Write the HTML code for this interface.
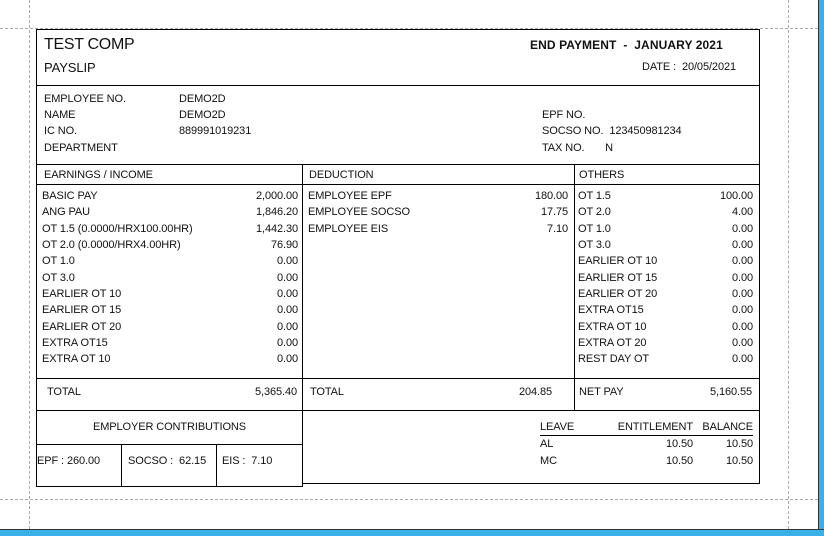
<!DOCTYPE html>
<html><head><meta charset="utf-8"><style>
*{margin:0;padding:0;box-sizing:border-box}
body{width:824px;height:536px;background:#fff;position:relative;overflow:hidden;font-family:"Liberation Sans",sans-serif;font-size:11px;color:#111;letter-spacing:-0.1px}
.a{position:absolute;white-space:nowrap;line-height:14px}
.r{text-align:right}
.h{position:absolute;background:#000;height:1px}
.v{position:absolute;background:#000;width:1px}
.dh{position:absolute;height:0;border-top:1px dashed #aaa}
.dv{position:absolute;width:0;border-left:1px dashed #aaa}
</style></head><body>
<div class="dv" style="left:29px;top:0;height:529px"></div>
<div class="dv" style="left:788px;top:0;height:529px"></div>
<div class="dh" style="left:0;top:28px;width:818px"></div>
<div class="dh" style="left:0;top:499px;width:818px"></div>
<div style="position:absolute;left:818px;top:0;width:6px;height:536px;background:#3ab0e8;border-left:1px solid #333"></div>
<div style="position:absolute;left:0;top:529px;width:824px;height:7px;background:#3ab0e8;border-top:1px solid #333"></div>

<div style="position:absolute;left:36px;top:29px;width:724px;height:455px;border:1px solid #000"></div>
<div class="h" style="left:36px;top:85px;width:724px"></div>
<div class="h" style="left:36px;top:164px;width:724px"></div>
<div class="h" style="left:36px;top:184px;width:724px"></div>
<div class="h" style="left:36px;top:378px;width:724px"></div>
<div class="h" style="left:36px;top:410px;width:724px"></div>
<div class="v" style="left:302px;top:164px;height:320px"></div>
<div class="v" style="left:574px;top:164px;height:246px"></div>
<div style="position:absolute;left:36px;top:410px;width:267px;height:77px;border:1px solid #000;background:#fff"></div>
<div class="h" style="left:36px;top:444px;width:267px"></div>
<div class="v" style="left:121px;top:444px;height:43px"></div>
<div class="v" style="left:216px;top:444px;height:43px"></div>

<div class="a" style="left:44px;top:36px;font-size:16px;line-height:18px;letter-spacing:-0.3px">TEST COMP</div>
<div class="a" style="left:44px;top:60px;font-size:13px;line-height:15px">PAYSLIP</div>
<div class="a" style="left:530px;top:38px;font-size:12px;font-weight:bold;letter-spacing:0.1px">END PAYMENT &nbsp;- &nbsp;JANUARY 2021</div>
<div class="a" style="left:642px;top:60px">DATE : &nbsp;20/05/2021</div>

<div class="a" style="left:44px;top:92px">EMPLOYEE NO.</div>
<div class="a" style="left:179px;top:92px">DEMO2D</div>
<div class="a" style="left:44px;top:108px">NAME</div>
<div class="a" style="left:179px;top:108px">DEMO2D</div>
<div class="a" style="left:44px;top:124px">IC NO.</div>
<div class="a" style="left:179px;top:124px">889991019231</div>
<div class="a" style="left:44px;top:141px">DEPARTMENT</div>
<div class="a" style="left:542px;top:108px">EPF NO.</div>
<div class="a" style="left:542px;top:124px">SOCSO NO. &nbsp;123450981234</div>
<div class="a" style="left:542px;top:141px">TAX NO. &nbsp;&nbsp;&nbsp;&nbsp;&nbsp;&nbsp;N</div>

<div class="a" style="left:44px;top:168px">EARNINGS / INCOME</div>
<div class="a" style="left:309px;top:168px">DEDUCTION</div>
<div class="a" style="left:579px;top:168px">OTHERS</div>

<div class="a" style="left:42px;top:189px">BASIC PAY</div><div class="a r" style="right:526px;top:189px">2,000.00</div>
<div class="a" style="left:42px;top:205px">ANG PAU</div><div class="a r" style="right:526px;top:205px">1,846.20</div>
<div class="a" style="left:42px;top:222px">OT 1.5 (0.0000/HRX100.00HR)</div><div class="a r" style="right:526px;top:222px">1,442.30</div>
<div class="a" style="left:42px;top:238px">OT 2.0 (0.0000/HRX4.00HR)</div><div class="a r" style="right:526px;top:238px">76.90</div>
<div class="a" style="left:42px;top:254px">OT 1.0</div><div class="a r" style="right:526px;top:254px">0.00</div>
<div class="a" style="left:42px;top:271px">OT 3.0</div><div class="a r" style="right:526px;top:271px">0.00</div>
<div class="a" style="left:42px;top:287px">EARLIER OT 10</div><div class="a r" style="right:526px;top:287px">0.00</div>
<div class="a" style="left:42px;top:303px">EARLIER OT 15</div><div class="a r" style="right:526px;top:303px">0.00</div>
<div class="a" style="left:42px;top:320px">EARLIER OT 20</div><div class="a r" style="right:526px;top:320px">0.00</div>
<div class="a" style="left:42px;top:336px">EXTRA OT15</div><div class="a r" style="right:526px;top:336px">0.00</div>
<div class="a" style="left:42px;top:352px">EXTRA OT 10</div><div class="a r" style="right:526px;top:352px">0.00</div>

<div class="a" style="left:308px;top:189px">EMPLOYEE EPF</div><div class="a r" style="right:256px;top:189px">180.00</div>
<div class="a" style="left:308px;top:205px">EMPLOYEE SOCSO</div><div class="a r" style="right:256px;top:205px">17.75</div>
<div class="a" style="left:308px;top:222px">EMPLOYEE EIS</div><div class="a r" style="right:256px;top:222px">7.10</div>

<div class="a" style="left:578px;top:189px">OT 1.5</div><div class="a r" style="right:71px;top:189px">100.00</div>
<div class="a" style="left:578px;top:205px">OT 2.0</div><div class="a r" style="right:71px;top:205px">4.00</div>
<div class="a" style="left:578px;top:222px">OT 1.0</div><div class="a r" style="right:71px;top:222px">0.00</div>
<div class="a" style="left:578px;top:238px">OT 3.0</div><div class="a r" style="right:71px;top:238px">0.00</div>
<div class="a" style="left:578px;top:254px">EARLIER OT 10</div><div class="a r" style="right:71px;top:254px">0.00</div>
<div class="a" style="left:578px;top:271px">EARLIER OT 15</div><div class="a r" style="right:71px;top:271px">0.00</div>
<div class="a" style="left:578px;top:287px">EARLIER OT 20</div><div class="a r" style="right:71px;top:287px">0.00</div>
<div class="a" style="left:578px;top:303px">EXTRA OT15</div><div class="a r" style="right:71px;top:303px">0.00</div>
<div class="a" style="left:578px;top:320px">EXTRA OT 10</div><div class="a r" style="right:71px;top:320px">0.00</div>
<div class="a" style="left:578px;top:336px">EXTRA OT 20</div><div class="a r" style="right:71px;top:336px">0.00</div>
<div class="a" style="left:578px;top:352px">REST DAY OT</div><div class="a r" style="right:71px;top:352px">0.00</div>

<div class="a" style="left:47px;top:385px">TOTAL</div><div class="a r" style="right:527px;top:385px">5,365.40</div>
<div class="a" style="left:310px;top:385px">TOTAL</div><div class="a r" style="right:272px;top:385px">204.85</div>
<div class="a" style="left:579px;top:385px">NET PAY</div><div class="a r" style="right:72px;top:385px">5,160.55</div>

<div class="a" style="left:36px;top:420px;width:267px;text-align:center">EMPLOYER CONTRIBUTIONS</div>
<div class="a" style="left:37px;top:454px">EPF : 260.00</div>
<div class="a" style="left:128px;top:454px">SOCSO : &nbsp;62.15</div>
<div class="a" style="left:222px;top:454px">EIS : &nbsp;7.10</div>

<div class="a" style="left:540px;top:420px">LEAVE</div>
<div class="a r" style="right:131px;top:420px">ENTITLEMENT</div>
<div class="a r" style="right:71px;top:420px">BALANCE</div>
<div class="h" style="left:540px;top:435px;width:213px"></div>
<div class="a" style="left:540px;top:437px">AL</div><div class="a r" style="right:131px;top:437px">10.50</div><div class="a r" style="right:71px;top:437px">10.50</div>
<div class="a" style="left:540px;top:454px">MC</div><div class="a r" style="right:131px;top:454px">10.50</div><div class="a r" style="right:71px;top:454px">10.50</div>
</body></html>
